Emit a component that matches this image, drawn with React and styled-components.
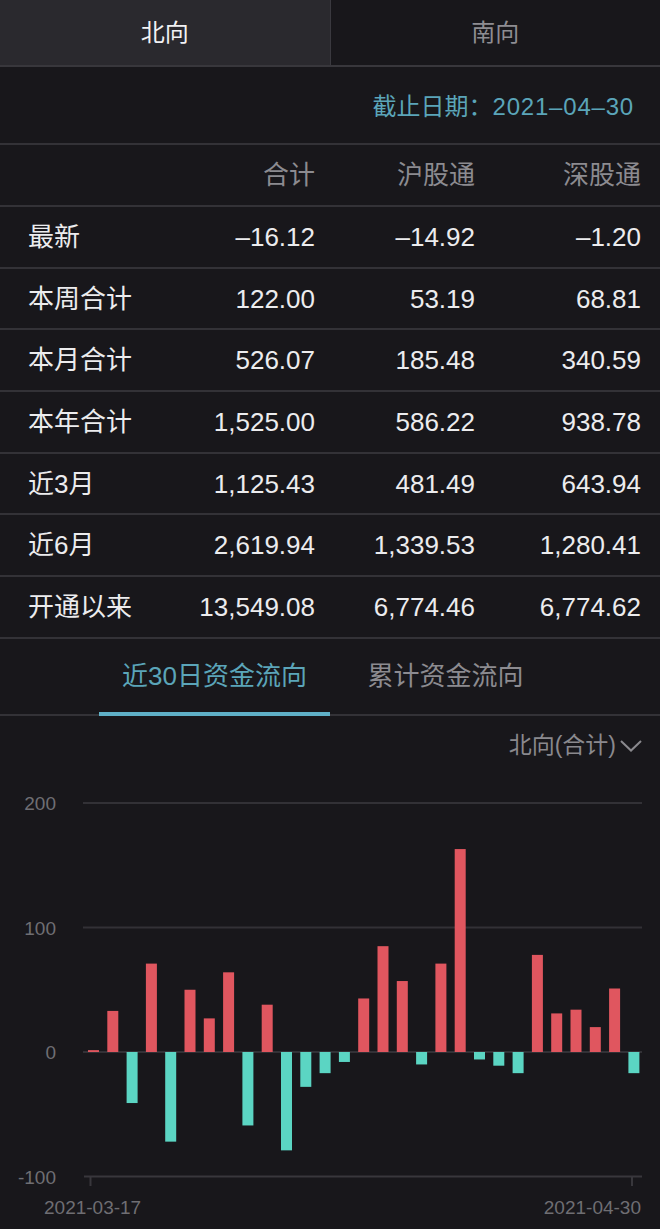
import React from "react";
import styled, { createGlobalStyle } from "styled-components";

const Global = createGlobalStyle`
  html, body { margin: 0; padding: 0; background: #18171b; }
  body { font-family: "Liberation Sans", "Noto Sans CJK SC", sans-serif; }
  * { box-sizing: border-box; }
`;

const Page = styled.div`
  width: 660px;
  min-height: 1229px;
  background: #18171b;
  color: #ececee;
  overflow: hidden;
`;

const TopTabs = styled.div`
  display: flex;
  height: 67px;
  border-bottom: 2px solid #38373c;
`;

const TopTab = styled.div`
  flex: 1;
  display: flex;
  align-items: center;
  justify-content: center;
  font-size: 24px;
  line-height: 1;
  background: ${(p) => (p.$active ? "#2a292e" : "transparent")};
  color: ${(p) => (p.$active ? "#f2f2f4" : "#8e8d92")};
  border-right: ${(p) => (p.$active ? "1px solid #3a393f" : "none")};
`;

const DateRow = styled.div`
  height: 78px;
  display: flex;
  align-items: center;
  justify-content: flex-end;
  padding: 4px 26px 0 0;
  border-bottom: 2px solid #333237;
  color: #5ba5b9;
  font-size: 24px;
  line-height: 1;
`;

const DateValue = styled.span`
  letter-spacing: 0.8px;
`;

const Row = styled.div`
  display: grid;
  grid-template-columns: 1fr 160px 160px 166px;
  align-items: center;
  padding: 0 19px 0 28px;
  height: ${(p) => (p.$header ? "62px" : "61.7px")};
  border-bottom: 2px solid #333237;
  font-size: 26px;
  line-height: 1;
  color: ${(p) => (p.$header ? "#8c8b90" : "#ececee")};
`;

const Label = styled.div`
  text-align: left;
  white-space: nowrap;
`;

const Cell = styled.div`
  text-align: right;
  white-space: nowrap;
`;

const ChartTabs = styled.div`
  display: flex;
  justify-content: center;
  height: 77px;
  border-bottom: 2px solid #333237;
`;

const ChartTab = styled.div`
  width: 231px;
  display: flex;
  align-items: center;
  justify-content: center;
  font-size: 26px;
  line-height: 1;
  color: ${(p) => (p.$active ? "#5ba5b9" : "#8c8b90")};
  margin-bottom: -2px;
  padding-top: 2px;
  border-bottom: 4px solid ${(p) => (p.$active ? "#5fb0c7" : "transparent")};
`;

const SelectRow = styled.div`
  height: 60px;
  display: flex;
  align-items: center;
  justify-content: flex-end;
  padding-right: 18px;
  gap: 4px;
  color: #8a898e;
  font-size: 23px;
  line-height: 1;
`;

const ChartSvg = styled.svg`
  display: block;
  width: 660px;
  height: 453px;
`;

const rows = [
  ["最新", "–16.12", "–14.92", "–1.20"],
  ["本周合计", "122.00", "53.19", "68.81"],
  ["本月合计", "526.07", "185.48", "340.59"],
  ["本年合计", "1,525.00", "586.22", "938.78"],
  ["近3月", "1,125.43", "481.49", "643.94"],
  ["近6月", "2,619.94", "1,339.53", "1,280.41"],
  ["开通以来", "13,549.08", "6,774.46", "6,774.62"],
];

const flows = [
  1.5, 33, -41, 71, -72, 50, 27, 64, -59, 38, -79, -28, -17, -8, 43, 85, 57,
  -10, 71, 163, -6, -11, -17, 78, 31, 34, 20, 51, -17,
];

const ZERO = 276;
const UNIT = 1.245;

function Chart() {
  const grid = [200, 100, 0];
  return (
    <ChartSvg viewBox="0 0 660 453">
      {grid.map((v) => {
        const y = ZERO - v * UNIT;
        return (
          <g key={v}>
            <line x1="83" x2="642" y1={y} y2={y} stroke="#323136" strokeWidth="2" />
            <text
              x="56"
              y={y + 7}
              textAnchor="end"
              fontSize="19"
              fill="#6f6e73"
              fontFamily="Liberation Sans, sans-serif"
            >
              {v}
            </text>
          </g>
        );
      })}
      {flows.map((v, i) => {
        const x = 88 + i * 19.3;
        const h = Math.abs(v) * UNIT;
        const y = v >= 0 ? ZERO - h : ZERO;
        return (
          <rect
            key={i}
            x={x}
            y={y}
            width="11"
            height={h}
            fill={v >= 0 ? "#e0565f" : "#5bd5c3"}
          />
        );
      })}
      <line x1="84" x2="642" y1="400.5" y2="400.5" stroke="#38373c" strokeWidth="2" />
      <line x1="90.5" x2="90.5" y1="400.5" y2="410" stroke="#38373c" strokeWidth="2" />
      <line x1="632" x2="632" y1="400.5" y2="410" stroke="#38373c" strokeWidth="2" />
      <text
        x="56"
        y="407.5"
        textAnchor="end"
        fontSize="19"
        fill="#6f6e73"
        fontFamily="Liberation Sans, sans-serif"
      >
        -100
      </text>
      <text x="44" y="438" fontSize="19" fill="#6f6e73" fontFamily="Liberation Sans, sans-serif">
        2021-03-17
      </text>
      <text
        x="641"
        y="438"
        textAnchor="end"
        fontSize="19"
        fill="#6f6e73"
        fontFamily="Liberation Sans, sans-serif"
      >
        2021-04-30
      </text>
    </ChartSvg>
  );
}

export default function App() {
  return (
    <Page>
      <Global />
      <TopTabs>
        <TopTab $active>北向</TopTab>
        <TopTab>南向</TopTab>
      </TopTabs>
      <DateRow>
        截止日期：<DateValue>2021–04–30</DateValue>
      </DateRow>
      <Row $header>
        <Label />
        <Cell>合计</Cell>
        <Cell>沪股通</Cell>
        <Cell>深股通</Cell>
      </Row>
      {rows.map((r) => (
        <Row key={r[0]}>
          <Label>{r[0]}</Label>
          <Cell>{r[1]}</Cell>
          <Cell>{r[2]}</Cell>
          <Cell>{r[3]}</Cell>
        </Row>
      ))}
      <ChartTabs>
        <ChartTab $active>近30日资金流向</ChartTab>
        <ChartTab>累计资金流向</ChartTab>
      </ChartTabs>
      <SelectRow>
        北向(合计)
        <svg width="22" height="12" viewBox="0 0 22 12">
          <polyline points="1,1 11,10.5 21,1" fill="none" stroke="#8a898e" strokeWidth="2" />
        </svg>
      </SelectRow>
      <Chart />
    </Page>
  );
}
